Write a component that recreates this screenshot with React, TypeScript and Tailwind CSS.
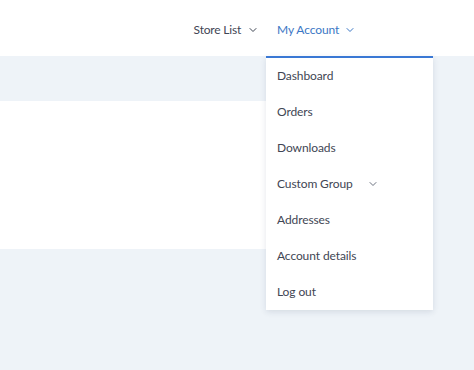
import { ChevronDown } from 'lucide-react';

const ACCOUNT_LINKS = [
  { label: 'Dashboard' },
  { label: 'Orders' },
  { label: 'Downloads' },
  { label: 'Custom Group', hasChildren: true },
  { label: 'Addresses' },
  { label: 'Account details' },
  { label: 'Log out' },
];

export default function App() {
  return (
    <div
      className="flex min-h-[370px] w-full flex-col bg-[#eef3f8]"
      style={{ fontFamily: 'Lato, "Noto Sans", sans-serif' }}
    >
      <header className="relative z-10 flex h-14 items-center justify-end bg-white pr-[41px] pt-[3px]">
        <nav className="flex h-full items-stretch">
          <div className="flex items-center gap-[6px] pl-[11px] pr-[7px] text-[12px] tracking-[-0.2px] text-[#3f4654]">
            Store List
            <ChevronDown className="h-3 w-3" strokeWidth={2} />
          </div>
          <div className="relative flex w-[167px] items-center gap-[5px] pl-[11px] text-[12px] tracking-[-0.1px] text-[#3b77c5]">
            My Account
            <ChevronDown className="h-3 w-3" strokeWidth={2} />
          </div>
        </nav>
      </header>
      <div className="relative h-[45px]">
        <ul className="absolute right-[41px] top-0 z-10 w-[167px] border-t-2 border-[#3a78d4] bg-white shadow-[0_2px_6px_rgba(30,50,80,0.12)]">
          {ACCOUNT_LINKS.map((link) => (
            <li
              key={link.label}
              className="flex h-9 items-center gap-[14px] pl-[11px] text-[12px] tracking-[-0.1px] text-[#3f4654]"
            >
              {link.label}
              {link.hasChildren && (
                <ChevronDown className="h-3 w-3 text-[#6b7280]" strokeWidth={2} />
              )}
            </li>
          ))}
        </ul>
      </div>
      <div className="h-[148px] w-[380px] bg-white" />
    </div>
  );
}
